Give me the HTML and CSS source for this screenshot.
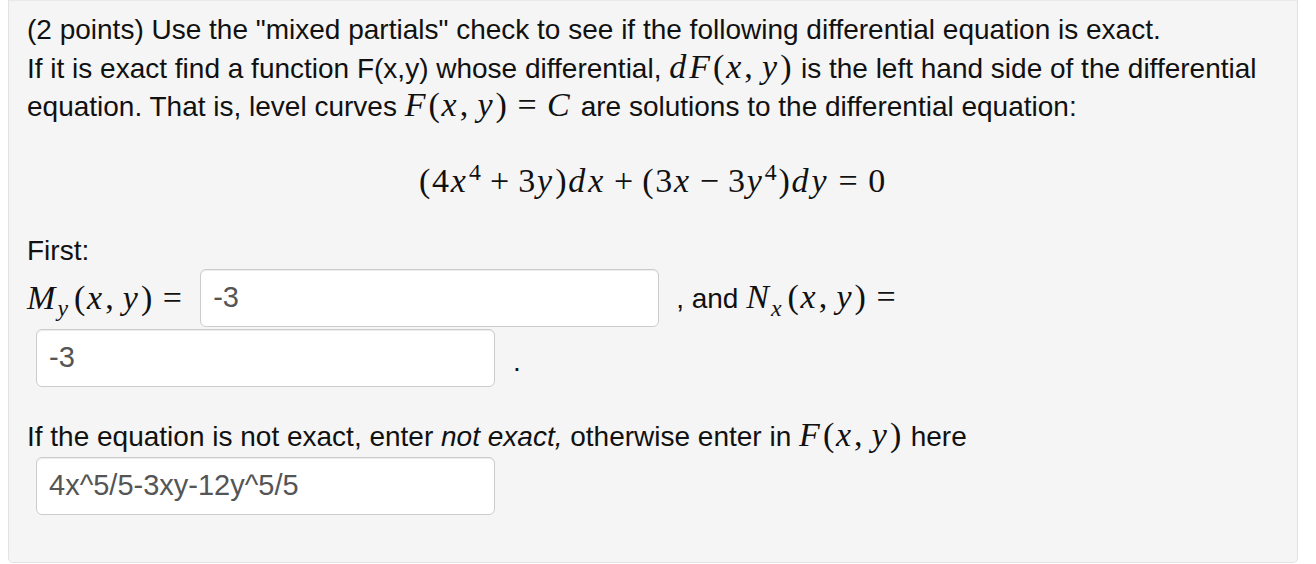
FILE: index.html
```html
<!DOCTYPE html>
<html>
<head>
<meta charset="utf-8">
<link rel="stylesheet" href="styles.css">
</head>
<body>
<div class="well">
  <p class="intro">(2 points) Use the "mixed partials" check to see if the following differential equation is exact.<br>If it is exact find a function F(x,y) whose differential, <span class="m"><i>dF</i>(<i>x</i>,<span class="th"></span><i>y</i>)</span> is the left hand side of the differential<br>equation. That is, level curves <span class="m"><i>F</i>(<i>x</i>,<span class="th"></span><i>y</i>)<span class="rel">=</span><i>C</i></span> are solutions to the differential equation:</p>
  <div class="display"><span class="m">(4<i>x</i><sup>4</sup><span class="bin">+</span>3<i>y</i>)<i>dx</i><span class="bin">+</span>(3<i>x</i><span class="bin">−</span>3<i>y</i><sup>4</sup>)<i>dy</i><span class="rel">=</span>0</span></div>
  <p class="first">First:</p>
  <div class="row row1">
    <span class="m"><i>M</i><sub class="wide"><i>y</i></sub>(<i>x</i>,<span class="th"></span><i>y</i>)<span class="rel last">=</span></span>
    <span class="field">-3</span>
    <span class="after">, and <span class="m"><i>N</i><sub class="wide"><i>x</i></sub>(<i>x</i>,<span class="th"></span><i>y</i>)<span class="rel">=</span></span></span>
  </div>
  <div class="row row2">
    <span class="field">-3</span>
    <span class="dot">.</span>
  </div>
  <p class="prompt">If the equation is not exact, enter <em>not exact,</em> otherwise enter in <span class="m"><i>F</i>(<i>x</i>,<span class="th"></span><i>y</i>)</span> here</p>
  <div class="row row3">
    <span class="field">4x^5/5-3xy-12y^5/5</span>
  </div>
</div>
</body>
</html>
```
FILE: styles.css
```css
html, body {
  margin: 0;
  padding: 0;
  background: #ffffff;
}
body {
  font-family: "Liberation Sans", Arial, Helvetica, sans-serif;
  font-size: 28px;
  color: #111;
}
.well {
  margin: 0 18px 0 8px;
  background: #f5f5f5;
  border: 1px solid #e3e3e3;
  border-top: 0;
  border-radius: 0 0 5px 5px;
  box-shadow: inset 0 1px 1px rgba(0,0,0,0.05);
  padding: 11px 18px 47px 18px;
}
.intro {
  margin: 0;
  line-height: 38.5px;
}
.m {
  font-family: "Liberation Serif", "Times New Roman", serif;
  font-size: 34px;
  line-height: 1;
  letter-spacing: 0.05em;
  white-space: nowrap;
}
.m i {
  font-style: italic;
  letter-spacing: 0.09em;
}
.th {
  display: inline-block;
  width: 0.22em;
}
.bin {
  margin: 0 0.22em;
}
.rel {
  margin: 0 0.26em;
}
.rel.last {
  margin-right: 0.13em;
}
sup, sub {
  font-size: 70%;
  line-height: 0;
}
sup {
  vertical-align: 0.5em;
}
sub {
  vertical-align: -0.32em;
}
sub.wide {
  margin-left: -0.04em;
  margin-right: 0.16em;
}
.display {
  text-align: center;
  margin: 33px 0 0 0;
  font-family: "Liberation Serif", serif;
  font-size: 34px;
  line-height: 42px;
}
.first {
  margin: 31px 0 0 0;
  line-height: 36px;
}
.row {
  display: flex;
  align-items: center;
  height: 58px;
}
.row2 {
  margin-top: 2px;
}
.field {
  display: flex;
  align-items: center;
  box-sizing: border-box;
  flex: none;
  width: 459px;
  height: 58px;
  margin: 0 0 0 12px;
  padding: 0 12px;
  background: #fff;
  border: 1px solid #cccccc;
  border-radius: 6px;
  box-shadow: inset 0 1px 1px rgba(0,0,0,0.075);
  font-family: "Liberation Sans", Arial, sans-serif;
  font-size: 29px;
  color: #555;
}
.row2 .field, .row3 .field {
  margin-left: 9px;
}
.after {
  margin-left: 17px;
}
.dot {
  margin-left: 18px;
  padding-top: 8px;
}
.prompt {
  margin: 31px 0 0 0;
  line-height: 38px;
}
.row3 {
  margin-top: 1px;
}
```
